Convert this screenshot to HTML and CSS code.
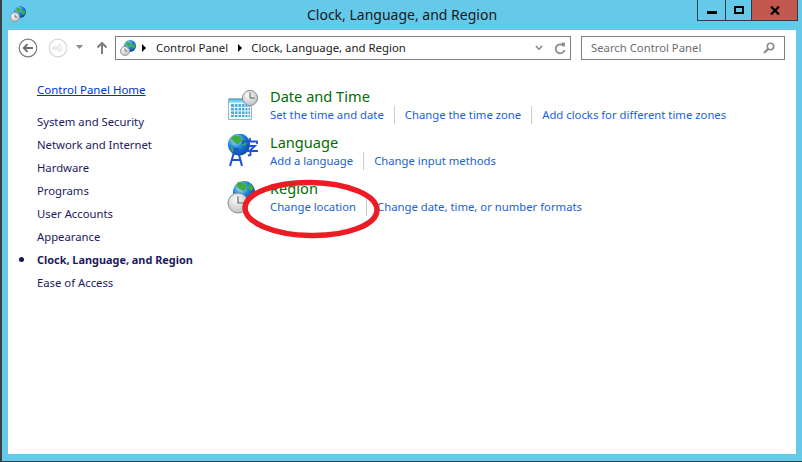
FILE: index.html
```html
<!DOCTYPE html>
<html lang="en">
<head>
<meta charset="utf-8">
<title>Clock, Language, and Region</title>
<link rel="stylesheet" href="styles.css">
</head>
<body>
<svg width="0" height="0" class="defs">
  <defs>
    <radialGradient id="globe" cx="35%" cy="30%" r="80%">
      <stop offset="0" stop-color="#c9ecfa"/><stop offset=".45" stop-color="#1c86dc"/><stop offset="1" stop-color="#0b3d91"/>
    </radialGradient>
    <radialGradient id="face" cx="40%" cy="35%" r="75%">
      <stop offset="0" stop-color="#fbfbfb"/><stop offset="1" stop-color="#b4b8bb"/>
    </radialGradient>
    <linearGradient id="band" x1="0" y1="0" x2="0" y2="1">
      <stop offset="0" stop-color="#2fb6dc"/><stop offset="1" stop-color="#bfe6f2"/>
    </linearGradient>
    <symbol id="cp" viewBox="0 0 16 16">
      <circle cx="10" cy="6" r="6" fill="url(#globe)"/>
      <path d="M7 1.5l3 1 1 2-2 2-2-1-1-2zM12 4l3 1 .5 2-2.500 2-1.500-2z" fill="#3fae3a"/>
      <circle cx="5" cy="11" r="4.600" fill="url(#face)" stroke="#8b9093" stroke-width=".8"/>
      <path d="M5 8.500V11h2.200" fill="none" stroke="#555" stroke-width=".8"/>
    </symbol>
  </defs>
</svg>
<div class="window">
  <header class="titlebar">
    <svg class="title-icon"><use href="#cp"/></svg>
    <div class="title">Clock, Language, and Region</div>
    <div class="controls">
      <div class="ctl ctl-min"><span class="min-glyph"></span></div>
      <div class="ctl ctl-max"><span class="max-glyph"></span></div>
      <div class="ctl ctl-close">
        <svg width="10" height="9" viewBox="0 0 10 9"><path d="M1 .5l8 8M9 .5l-8 8" stroke="#000" stroke-width="2.200" fill="none"/></svg>
      </div>
    </div>
  </header>
  <div class="client">
    <div class="toolbar">
      <div class="nav">
        <svg class="nav-round" width="20" height="20" viewBox="0 0 20 20"><circle cx="10" cy="10" r="8.800" fill="#fff" stroke="#7c7c7c" stroke-width="1.200"/><path d="M15 10H6M9.500 6.200L5.700 10l3.800 3.800" fill="none" stroke="#6a6a6a" stroke-width="1.800"/></svg>
        <svg class="nav-round nav-fwd" width="20" height="20" viewBox="0 0 20 20"><circle cx="10" cy="10" r="8.800" fill="#fff" stroke="#d8d8d8" stroke-width="1.200"/><path d="M5 9h6V6.500l3.500 3.500-3.500 3.500V11H5z" fill="none" stroke="#d8d8d8"/></svg>
        <svg class="nav-drop" width="8" height="5" viewBox="0 0 8 5"><path d="M0 0h7L3.500 4z" fill="#8a8a8a"/></svg>
        <svg class="nav-up" width="12" height="14" viewBox="0 0 12 14"><path d="M6 13V2M1.500 6.500L6 2l4.500 4.500" fill="none" stroke="#7f7f7f" stroke-width="2"/></svg>
      </div>
      <div class="address">
        <svg class="addr-icon"><use href="#cp"/></svg>
        <span class="crumb-arrow"></span>
        <span class="crumb">Control Panel</span>
        <span class="crumb-arrow"></span>
        <span class="crumb">Clock, Language, and Region</span>
        <svg class="addr-chev" width="8" height="6" viewBox="0 0 8 6"><path d="M.8 1l3.200 3.200L7.200 1" fill="none" stroke="#8a8a8a" stroke-width="1.600"/></svg>
        <svg class="addr-refresh" width="12" height="13" viewBox="0 0 12 13"><path d="M9.800 4.200A4.500 4.500 0 1 0 10.500 8" fill="none" stroke="#8a8a8a" stroke-width="1.800"/><path d="M7 .5l4 .3-.3 4.200z" fill="#8a8a8a"/></svg>
      </div>
      <div class="search">
        <span class="search-text">Search Control Panel</span>
        <svg width="12" height="12" viewBox="0 0 12 12"><circle cx="7.500" cy="4.500" r="3.200" fill="none" stroke="#8a8a8a" stroke-width="1.600"/><path d="M5 7l-4 4" stroke="#8a8a8a" stroke-width="2.200"/></svg>
      </div>
    </div>
    <div class="content">
      <nav class="sidebar">
        <a class="home">Control Panel Home</a>
        <ul class="side-list">
          <li>System and Security</li>
          <li>Network and Internet</li>
          <li>Hardware</li>
          <li>Programs</li>
          <li>User Accounts</li>
          <li>Appearance</li>
          <li class="current">Clock, Language, and Region</li>
          <li>Ease of Access</li>
        </ul>
      </nav>
      <main class="main">
        <section class="group">
          <svg class="group-icon" viewBox="0 0 34 34">
            <path d="M2.500 10.500h23v21h-23z" fill="#f4f8fa" stroke="#a9b4ba"/>
            <path d="M3 11h22v4H3z" fill="url(#band)"/>
            <path d="M5 16h19v13H5z" fill="#45ade0"/>
            <path d="M5 19.500h19M5 23h19M5 26.500h19M8.500 16v13M12 16v13M15.500 16v13M19 16v13M22 16v13" stroke="#f2fafd" stroke-width="1"/>
            <circle cx="24" cy="10" r="7.600" fill="url(#face)" stroke="#8b9093"/>
            <path d="M24 4.500V10h4.500" fill="none" stroke="#555" stroke-width="1"/>
          </svg>
          <div class="group-body">
            <h2>Date and Time</h2>
            <div class="links"><a>Set the time and date</a><a>Change the time zone</a><a>Add clocks for different time zones</a></div>
          </div>
        </section>
        <section class="group">
          <svg class="group-icon" viewBox="0 0 34 34">
            <circle cx="13" cy="10.500" r="11" fill="url(#globe)"/>
            <path d="M8 1.500l6 1 2 4-4 4-4-2-3-4zM17 4l4 4-2 4-3-2zM4 13l4 2 1 4-3-1z" fill="#3fae3a"/>
            <path d="M4 32L9 15h2.500L16 32M6.200 26h7.800" fill="none" stroke="#1d4fd8" stroke-width="2"/>
            <path d="M24 4v3M17 10V7.500h14V10M19.500 12h9.500L24.500 16V21l-2.500 .5M16 17h16" fill="none" stroke="#1d4fd8" stroke-width="1.800"/>
          </svg>
          <div class="group-body">
            <h2>Language</h2>
            <div class="links"><a>Add a language</a><a>Change input methods</a></div>
          </div>
        </section>
        <section class="group">
          <svg class="group-icon" viewBox="0 0 34 34">
            <circle cx="18" cy="12" r="11" fill="url(#globe)"/>
            <path d="M12 2l6 1 3 4-3 4-5-2-3-4zM23 3l5 5-3 3-3-3z" fill="#3fae3a"/>
            <circle cx="12" cy="23" r="10" fill="url(#face)" stroke="#8b9093"/>
            <path d="M12 16.500V23h5.500" fill="none" stroke="#666" stroke-width="1.200"/>
          </svg>
          <div class="group-body">
            <h2>Region</h2>
            <div class="links"><a>Change location</a><a>Change date, time, or number formats</a></div>
          </div>
        </section>
      </main>
    </div>
  </div>
  <svg class="annotation" width="146" height="66" viewBox="0 0 146 66">
    <ellipse cx="73" cy="32" rx="66" ry="26.500" transform="rotate(1 73 32)" fill="none" stroke="#ed1c24" stroke-width="5.500"/>
  </svg>
</div>
</body>
</html>
```
FILE: styles.css
```css
* { box-sizing: border-box; }
html, body { margin: 0; padding: 0; }
body { width: 802px; height: 462px; overflow: hidden; font-family: "Noto Sans", "Open Sans", sans-serif; font-size: 11.3px; }
.defs { position: absolute; }
.window { position: relative; width: 802px; height: 462px; display: flex; flex-direction: column; background: #65c9ea; border-left: 2px solid #3a3f42; border-bottom: 1px solid #3a3f42; }
.titlebar { height: 30px; flex: none; display: flex; align-items: flex-start; position: relative; }
.title-icon { width: 16px; height: 16px; margin: 6px 0 0 8px; flex: none; }
.title { position: absolute; left: 0; right: 0; top: 5px; text-align: center; font-size: 14px; line-height: 20px; color: #1a1a1a; }
.controls { margin-left: auto; display: flex; height: 21px; border: 1px solid #2f3d44; border-top: 0; position: relative; margin-right: 4px; }
.ctl { display: flex; justify-content: center; }
.ctl-min { width: 28px; border-right: 1px solid #2f3d44; }
.ctl-max { width: 26px; border-right: 1px solid #2f3d44; }
.ctl-close { width: 45px; background: #c2584f; align-items: center; }
.min-glyph { width: 10px; height: 3px; background: #000; margin-top: 11px; }
.max-glyph { width: 10px; height: 8px; border: 2px solid #000; margin-top: 6px; }
.client { flex: none; height: 424px; margin: 0 0 0 6px; width: 788px; background: #fff; display: flex; flex-direction: column; }
.toolbar { height: 36px; flex: none; display: flex; align-items: flex-start; padding: 6px 0 0 10px; }
.nav { display: flex; align-items: center; height: 23px; width: 97px; flex: none; }
.nav-fwd { margin-left: 10px; }
.nav-drop { margin-left: 8px; }
.nav-up { margin-left: 12px; }
.address { width: 456px; height: 24px; border: 1px solid #808080; display: flex; align-items: center; flex: none; padding-left: 4px; color: #1a1a1a; }
.addr-icon { width: 16px; height: 16px; flex: none; }
.crumb-arrow { width: 0; height: 0; border-left: 4px solid #000; border-top: 4px solid transparent; border-bottom: 4px solid transparent; margin: 0 10px 0 6px; flex: none; }
.crumb { margin-right: 3px; white-space: nowrap; font-size: 11.4px; padding-bottom: 2px; }
.crumb + .crumb-arrow { margin-left: 7px; margin-right: 9px; }
.addr-chev { margin-left: auto; }
.addr-refresh { margin: 0 4px 0 11px; }
.search { width: 204px; height: 24px; margin-left: 10px; border: 1px solid #808080; display: flex; align-items: center; justify-content: space-between; padding: 0 9px 0 9px; flex: none; }
.search-text { color: #6d6d6d; padding-bottom: 2px; }
.content { display: flex; flex: 1; }
.sidebar { width: 219px; flex: none; padding: 15px 0 0 29px; }
.home { color: #0033cc; text-decoration: underline; line-height: 18px; display: block; font-size: 11.5px; }
.side-list { list-style: none; margin: 13px 0 0; padding: 0; color: #1c1a5e; }
.side-list li { height: 23px; line-height: 20px; position: relative; white-space: nowrap; }
.current { font-weight: 700; font-size: 10.9px; }
.current::before { content: ""; position: absolute; left: -18px; top: 7px; width: 5px; height: 5px; border-radius: 50%; background: #14145a; }
.main { flex: 1; padding: 20px 0 0 0; }
.group { display: flex; height: 46px; }
.group-icon { width: 34px; height: 34px; flex: none; margin: 2px 0 0 -1px; }
.group-body { margin-left: 10px; }
.group h2 { margin: 0; font-size: 14.6px; font-weight: 400; line-height: 20px; color: #036d03; }
.links { display: flex; line-height: 18px; color: #1a62d6; white-space: nowrap; }
.links a + a { border-left: 1px solid #ccc; margin-left: 10px; padding-left: 10px; }
.annotation { position: absolute; left: 236px; top: 177px; }
```
